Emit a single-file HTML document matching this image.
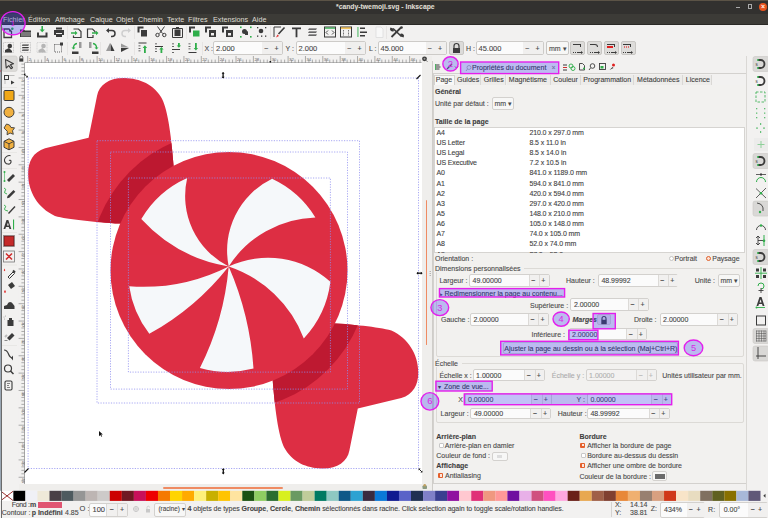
<!DOCTYPE html>
<html><head><meta charset="utf-8">
<style>
html,body{margin:0;padding:0;}
body{width:768px;height:518px;overflow:hidden;position:relative;background:#f2f1f0;font-family:"Liberation Sans",sans-serif;}
.a{position:absolute;}
.t{position:absolute;font-size:7px;line-height:8px;white-space:nowrap;color:#3c3c3c;-webkit-text-stroke:0.1px currentColor;}
.b{font-weight:bold;}
.mn{position:absolute;top:15.2px;font-size:7.2px;line-height:9px;color:#dfdbd2;white-space:nowrap;}
.inp{position:absolute;background:#fff;border:1px solid #cdcbc8;border-radius:2px;box-sizing:border-box;}
.sp{position:absolute;background:#f3f2f1;border:1px solid #cdcbc8;border-radius:0 2px 2px 0;box-sizing:border-box;}
.btn{position:absolute;background:#efeeed;border:1px solid #c8c6c3;border-radius:2px;box-sizing:border-box;}
.pur{position:absolute;background:rgba(170,170,245,0.72);border:1.3px solid #e21be8;box-sizing:border-box;}
.circ{position:absolute;border-radius:50%;background:rgba(170,170,245,0.72);border:1.3px solid #e21be8;box-sizing:border-box;color:#d81ee0;font-size:9px;line-height:14px;text-align:center;}
.ico{position:absolute;}
</style></head><body>
<!-- title bar -->
<div class="a" style="left:0;top:0;width:768px;height:13.5px;background:#32312f;"></div>
<div class="a" style="left:0;top:0;width:768px;height:1px;background:#5b5346;"></div>
<div class="t b" style="left:336px;top:3.0px;color:#dfdbd2;font-size:6.8px;">*candy-twemoji.svg - Inkscape</div>
<div class="a" style="left:736px;top:7px;width:4px;height:1px;background:#aaa;"></div>
<div class="a" style="left:748px;top:4px;width:4px;height:5px;border:1px solid #aaa;box-sizing:border-box;"></div>
<div class="a" style="left:759px;top:3px;width:8px;height:8px;border-radius:50%;background:#e8541e;"></div>
<div class="t" style="left:760px;top:3.0px;color:#fff;font-size:7px;width:6px;text-align:center;">×</div>
<!-- menu bar -->
<div class="a" style="left:0;top:13.5px;width:768px;height:10px;background:#3c3b37;"></div><div class="a" style="left:0;top:23.5px;width:768px;height:0.7px;background:#2a2926;"></div>
<div class="mn" style="left:3px">Fichier</div>
<div class="mn" style="left:28px">Édition</div>
<div class="mn" style="left:55px">Affichage</div>
<div class="mn" style="left:90px">Calque</div>
<div class="mn" style="left:116px">Objet</div>
<div class="mn" style="left:138px">Chemin</div>
<div class="mn" style="left:167px">Texte</div>
<div class="mn" style="left:188px">Filtres</div>
<div class="mn" style="left:213px">Extensions</div>
<div class="mn" style="left:252px">Aide</div>

<!-- toolbars -->
<svg class="a" style="left:0;top:0" width="768" height="58" viewBox="0 0 768 58">
<g fill="none" stroke="#e2e1df" stroke-width="0.8">
<path d="M67.5 26v13M134.5 26v13M186.5 26v13M270.5 26v13M386.5 26v13M67.5 42v13M100.5 42v13M134.5 42v13M202.5 42v13M454.5 42v13"/>
</g>
<g fill="#3b3b3b" stroke="none">
<!-- new doc -->
<path d="M4 29h5l2.5 2.5v6h-7.5z" fill="none" stroke="#3b3b3b" stroke-width="1.3"/>
<path d="M9 29v2.5h2.5z"/>
<circle cx="12.3" cy="28.8" r="1.3" fill="#2fae4a"/>
<!-- open -->
<path d="M20 29.5h4l1 1h6v6.5h-11z"/>
<path d="M21 32h10.5l-1 4.5h-9.5z" fill="#f2f1f0" opacity="0.35"/>
<!-- save -->
<path d="M37 32.5h2v3h6.5v-3h2v5h-10.5z"/>
<path d="M41.4 26h1.6v3.5h1.8l-2.6 2.8-2.6-2.8h1.8z" fill="#2fae4a"/>
<!-- print -->
<path d="M56 27.5h6v2h-6z M54 30h10v5h-2v-2h-6v2h-2z M56 34h6v3h-6z"/>
<!-- import -->
<path d="M73.5 29h5l2.5 2.5v6h-7.5v-2" fill="none" stroke="#3b3b3b" stroke-width="1.2"/>
<path d="M71 32.2h4v-1.5l2.5 2.3-2.5 2.3v-1.5h-4z" fill="#2fae4a"/>
<!-- export -->
<path d="M93 35v2.5h-5.5v-8.5h5l2.5 2.5v1" fill="none" stroke="#3b3b3b" stroke-width="1.2"/>
<path d="M92 32.2h4v-1.5l2.5 2.3-2.5 2.3v-1.5h-4z" fill="#2fae4a"/>
<!-- undo -->
<path d="M107 30.5h5a3 3 0 0 1 0 6h-1" fill="none" stroke="#3b3b3b" stroke-width="1.5"/>
<path d="M106 30.5l3-2.5v5z"/>
<!-- redo faded -->
<path d="M130 30.5h-5a3 3 0 0 0 0 6h1" fill="none" stroke="#cfcfcf" stroke-width="1.5"/>
<path d="M131 30.5l-3-2.5v5z" fill="#cfcfcf"/>
<!-- copy -->
<path d="M137.5 26.5h6v2h-4v4h-2z"/><path d="M141 30h6v6.5h-6z"/>
<!-- cut -->
<path d="M157.5 26.5l5 7M164.5 26.5l-5 7" stroke="#3b3b3b" stroke-width="1" fill="none"/>
<circle cx="157.5" cy="35" r="1.7" fill="none" stroke="#3b3b3b" stroke-width="1"/><circle cx="164.3" cy="35" r="1.7" fill="none" stroke="#3b3b3b" stroke-width="1"/>
<!-- paste -->
<path d="M172.5 28.5h10v9h-10z" fill="none" stroke="#3b3b3b" stroke-width="1"/>
<path d="M174.5 29.5h6v6.5h-6z M176 27h3v1.5h-3z"/>
<!-- paste in place -->
<path d="M189 26.5h6v2h-4v4h-2z"/><path d="M193 30.5h6.5v6h-6.5z" fill="#2fae4a"/>
<!-- lock-ish -->
<path d="M205 26.5h6v2h-4v4h-2z"/><path d="M209 30h7v7h-7z"/><path d="M211 33h3v2.5h-3z" fill="#f2f1f0"/>
<path d="M222 26.5h6v2h-4v4h-2z"/><path d="M226 30h7v7h-7z"/><path d="M228 33h3v2.5h-3z" fill="#f2f1f0"/>
<!-- group -->
<circle cx="244.5" cy="31.5" r="2.5"/><path d="M245 33l3-2v4h-3z"/>
<g fill="#2fae4a"><rect x="240" y="26.5" width="1.6" height="1.6"/><rect x="250" y="26.5" width="1.6" height="1.6"/><rect x="240" y="36" width="1.6" height="1.6"/><rect x="250" y="36" width="1.6" height="1.6"/></g>
<!-- ungroup -->
<circle cx="261" cy="31" r="2.3"/><g><rect x="257" y="27" width="1.3" height="1.3"/><rect x="265" y="27" width="1.3" height="1.3"/><rect x="257" y="35.5" width="1.3" height="1.3"/><rect x="265" y="35.5" width="1.3" height="1.3"/><rect x="261" y="35.5" width="1.3" height="1.3"/></g>
<!-- fill stroke -->
<path d="M274 37v-10h7" fill="none" stroke="#3b3b3b" stroke-width="1"/>
<path d="M284.5 27.5l-6 6.5" stroke="#3b3b3b" stroke-width="1.6"/><path d="M276 37.5l1.5-3 1.5 1.5z" fill="#e53030"/>
<!-- T -->
<path d="M292 27.5h9v1.8h-3.6v8h-1.8v-8h-3.6z"/>
<!-- layers -->
<path d="M309 28.5h8l-1 1.3h-8z M309 31.5h8l-1 1.3h-8z M309 34.5h8l-1 1.3h-8z"/>
<!-- xml -->
<rect x="324.5" y="27" width="11" height="10" fill="none" stroke="#3b3b3b" stroke-width="1"/>
<rect x="325" y="27.5" width="10" height="1.2" fill="#2fae4a"/>
<path d="M328 30.5l-2 2 2 2M332 30.5l2 2-2 2" fill="none" stroke="#3b3b3b" stroke-width="0.9"/>
<!-- objects -->
<rect x="340.5" y="27" width="11" height="10" fill="none" stroke="#3b3b3b" stroke-width="1"/>
<rect x="341" y="27.5" width="10" height="1.2" fill="#f0b020"/>
<path d="M343.5 30v6M348.5 30v6" stroke="#555" stroke-width="0.8" stroke-dasharray="1 0.5"/>
<!-- align -->
<rect x="357.5" y="27" width="0.9" height="10" fill="#2fae4a"/>
<path d="M360 27.5h5v1.6h-5z M360 31.5h7v1.6h-7z M360 35h5v1.6h-5z"/>
<!-- faded doc -->
<path d="M376 27h5l2 2v8.5h-7z" fill="#f8f8f8" stroke="#dcdcdc" stroke-width="0.8"/>
<!-- prefs -->
<path d="M391.5 37l9.5-9.5" stroke="#3b3b3b" stroke-width="1.8"/><circle cx="401.5" cy="27.5" r="1.3"/><path d="M393 28.5l8.5 8" stroke="#3b3b3b" stroke-width="1.6"/><path d="M390.5 27.5a2.5 2.5 0 0 0 3.5 3.5l-1-2.5z"/><path d="M403.5 37.5a2.5 2.5 0 0 0-3.5-3.5l1 2.5z"/>
<!-- toolbar2 -->
<rect x="3.5" y="42.5" width="10" height="10" fill="none" stroke="#bdbdbd" stroke-width="0.8" stroke-dasharray="1 0.6"/>
<circle cx="9.8" cy="46" r="2.3"/><path d="M5 50l4-2 3 3v1.5h-7z"/>
<rect x="20.5" y="42.5" width="10" height="10" fill="none" stroke="#bdbdbd" stroke-width="0.8" stroke-dasharray="1 0.6"/>
<path d="M22.5 44.5h6.5l-0.7 1.2h-6.5z M22.5 47h6.5l-0.7 1.2h-6.5z M22.5 49.5h6.5l-0.7 1.2h-6.5z"/>
<rect x="37" y="42.5" width="10" height="10" fill="none" stroke="#cfcfcf" stroke-width="0.8" stroke-dasharray="1 0.6"/>
<circle cx="43.5" cy="46" r="2.3" fill="#b5b5b5"/><path d="M38.5 50l4-2 3 3v1.5h-7z" fill="#b5b5b5"/>
<rect x="54.5" y="44.5" width="7" height="7.5" fill="none" stroke="#3b3b3b" stroke-width="0.8" stroke-dasharray="1 1"/>
<rect x="60" y="42.5" width="3" height="3"/>
<!-- rotate -->
<path d="M72 51.5h6.5v2.5h-6.5z"/><rect x="79" y="42" width="2.5" height="6" fill="#999"/>
<path d="M77 43.5a4 4 0 0 0-3.5 4.5" fill="none" stroke="#2fae4a" stroke-width="1.3"/><path d="M71.5 47.5h4l-2 2z" fill="#2fae4a"/>
<path d="M92 51.5h6.5v2.5h-6.5z"/><rect x="89" y="42" width="2.5" height="6" fill="#999"/>
<path d="M93 43.5a4 4 0 0 1 3.5 4.5" fill="none" stroke="#2fae4a" stroke-width="1.3"/><path d="M98.5 47.5h-4l2 2z" fill="#2fae4a"/>
<!-- flip -->
<path d="M110 43l-4 8h4z" fill="#9a9a9a"/><path d="M110.5 43l4 8h-4z"/>
<path d="M121 43.5l8 4-8 0z" fill="#9a9a9a"/><path d="M121 48l8 0-8 4z"/>
<!-- raise/lower -->
<path d="M138.5 42.5h8v0.9h-8z M138.5 45.5h2v0.7h-2z M138.5 48h2v0.7h-2z M138.5 50.5h2v0.7h-2z"/>
<path d="M144 53v-5h-1.3l2.2-2.8 2.2 2.8h-1.3v5z" fill="#2fae4a"/>
<path d="M155 43.5h2v0.7h-2z M155 46h8v0.9h-8z M155 48.5h2v0.7h-2z M155 51h2v0.7h-2z"/>
<path d="M160.5 53v-3.5h-1.3l2.2-2.5 2.2 2.5h-1.3v3.5z" fill="#2fae4a"/>
<path d="M172 43.5h2v0.7h-2z M172 46h2v0.7h-2z M172 49h8v0.9h-8z M172 52h2v0.7h-2z"/>
<path d="M178 43v2.5h-1.3l2.2 2.3 2.2-2.3h-1.3v-2.5z" fill="#2fae4a"/>
<path d="M188.5 43.5h2v0.7h-2z M188.5 46h2v0.7h-2z M188.5 48.5h2v0.7h-2z M188.5 52h8v0.9h-8z"/>
<path d="M195 43v5h-1.3l2.2 2.5 2.2-2.5h-1.3v-5z" fill="#2fae4a"/>
</g>
</svg>
<div class="t" style="left:204.5px;top:44.7px;color:#484848">X :</div><div class="inp" style="left:213px;top:41px;width:70px;height:14px;background:#fbfbfb;"></div><div class="a" style="left:262px;top:42px;width:1px;height:12px;background:#dddbd8"></div><div class="a" style="left:272.5px;top:42px;width:1px;height:12px;background:#dddbd8"></div><div class="a" style="left:262px;top:42px;width:20px;height:12px;background:#f0efee"></div><div class="t" style="left:264px;top:44.7px;color:#666">−</div><div class="t" style="left:274.5px;top:44.7px;color:#444">+</div><div class="t" style="left:216px;top:44.7px;color:#484848;font-size:7.5px">2.000</div><div class="t" style="left:285.5px;top:44.7px;color:#484848">Y :</div><div class="inp" style="left:295.5px;top:41px;width:70.5px;height:14px;background:#fbfbfb;"></div><div class="a" style="left:345px;top:42px;width:1px;height:12px;background:#dddbd8"></div><div class="a" style="left:355.5px;top:42px;width:1px;height:12px;background:#dddbd8"></div><div class="a" style="left:345px;top:42px;width:20px;height:12px;background:#f0efee"></div><div class="t" style="left:347px;top:44.7px;color:#666">−</div><div class="t" style="left:357.5px;top:44.7px;color:#444">+</div><div class="t" style="left:298.5px;top:44.7px;color:#484848;font-size:7.5px">2.000</div><div class="t" style="left:369px;top:44.7px;color:#484848">L :</div><div class="inp" style="left:377.5px;top:41px;width:69.0px;height:14px;background:#fbfbfb;"></div><div class="a" style="left:425.5px;top:42px;width:1px;height:12px;background:#dddbd8"></div><div class="a" style="left:436.0px;top:42px;width:1px;height:12px;background:#dddbd8"></div><div class="a" style="left:425.5px;top:42px;width:20px;height:12px;background:#f0efee"></div><div class="t" style="left:427.5px;top:44.7px;color:#666">−</div><div class="t" style="left:438.0px;top:44.7px;color:#444">+</div><div class="t" style="left:380.5px;top:44.7px;color:#484848;font-size:7.5px">45.000</div><div class="t" style="left:466px;top:44.7px;color:#484848">H :</div><div class="inp" style="left:475.5px;top:41px;width:68.5px;height:14px;background:#fbfbfb;"></div><div class="a" style="left:523px;top:42px;width:1px;height:12px;background:#dddbd8"></div><div class="a" style="left:533.5px;top:42px;width:1px;height:12px;background:#dddbd8"></div><div class="a" style="left:523px;top:42px;width:20px;height:12px;background:#f0efee"></div><div class="t" style="left:525px;top:44.7px;color:#666">−</div><div class="t" style="left:535.5px;top:44.7px;color:#444">+</div><div class="t" style="left:478.5px;top:44.7px;color:#484848;font-size:7.5px">45.000</div><div class="btn" style="left:448.5px;top:41px;width:15.5px;height:14px;background:#dcdbd9"></div><svg class="a" style="left:450px;top:42px" width="13" height="12"><path d="M4 6v-2a2.5 2.5 0 0 1 5 0v2" fill="none" stroke="#3b3b3b" stroke-width="1.2"/><rect x="3" y="6" width="7" height="5" fill="#3b3b3b"/></svg><div class="btn" style="left:546px;top:41px;width:23px;height:14px;background:#f7f7f6"></div><div class="t" style="left:549px;top:44.7px;color:#484848">mm ▾</div><div class="btn" style="left:570px;top:41px;width:15px;height:14px;background:#dddcda"></div><div class="btn" style="left:587px;top:41px;width:15px;height:14px;background:#dddcda"></div><div class="btn" style="left:604px;top:41px;width:15px;height:14px;background:#dddcda"></div><div class="btn" style="left:620.5px;top:41px;width:15px;height:14px;background:#dddcda"></div><svg class="a" style="left:570px;top:41px" width="66" height="14" viewBox="570 41 66 14">
<g fill="#3b3b3b">
<path d="M573 44h8v3h-1v-2h-7z"/><path d="M573 52h1v1h-1zM575 52h1v1h-1zM577 52h4v-1l2 1.5-2 1.5v-1h-4z"/>
<path d="M590 44h5a3 3 0 0 1 3 3h-1a2 2 0 0 0-2-2h-5z"/><path d="M590 52h1v1h-1zM592 52h1v1h-1zM594 52h4v-1l2 1.5-2 1.5v-1h-4z"/>
<path d="M607 44h8v3h-1v-2h-7z"/><rect x="607" y="46" width="6" height="2" fill="#e02020"/><path d="M607 52h1v1h-1zM609 52h1v1h-1zM611 52h4v-1l2 1.5-2 1.5v-1h-4z"/>
<path d="M623 44h8v3h-1v-2h-7z"/><path d="M624 46l1 1-1 1M626 46l1 1-1 1M628 46l1 1-1 1" stroke="#e02020" stroke-width="0.6" fill="none"/><path d="M623 52h1v1h-1zM625 52h1v1h-1zM627 52h4v-1l2 1.5-2 1.5v-1h-4z"/>
</g></svg>
<div class="a" style="left:0;top:24px;width:1px;height:494px;background:#9aa7b4"></div>

<svg class="a" style="left:0;top:0" width="768" height="518" viewBox="0 0 768 518">
<rect x="18.6" y="56" width="403" height="7" fill="#f2f1f0"/>
<rect x="18.6" y="56" width="6.2" height="428" fill="#f2f1f0"/>
<path d="M27.70 56V63 M31.17 59.6V63 M34.64 59.6V63 M38.12 59.6V63 M41.59 59.6V63 M45.06 56V63 M48.53 59.6V63 M52.00 59.6V63 M55.48 59.6V63 M58.95 59.6V63 M62.42 56V63 M65.89 59.6V63 M69.36 59.6V63 M72.84 59.6V63 M76.31 59.6V63 M79.78 56V63 M83.25 59.6V63 M86.72 59.6V63 M90.20 59.6V63 M93.67 59.6V63 M97.14 56V63 M100.61 59.6V63 M104.08 59.6V63 M107.56 59.6V63 M111.03 59.6V63 M114.50 56V63 M117.97 59.6V63 M121.44 59.6V63 M124.92 59.6V63 M128.39 59.6V63 M131.86 56V63 M135.33 59.6V63 M138.80 59.6V63 M142.28 59.6V63 M145.75 59.6V63 M149.22 56V63 M152.69 59.6V63 M156.16 59.6V63 M159.64 59.6V63 M163.11 59.6V63 M166.58 56V63 M170.05 59.6V63 M173.52 59.6V63 M177.00 59.6V63 M180.47 59.6V63 M183.94 56V63 M187.41 59.6V63 M190.88 59.6V63 M194.36 59.6V63 M197.83 59.6V63 M201.30 56V63 M204.77 59.6V63 M208.24 59.6V63 M211.72 59.6V63 M215.19 59.6V63 M218.66 56V63 M222.13 59.6V63 M225.60 59.6V63 M229.08 59.6V63 M232.55 59.6V63 M236.02 56V63 M239.49 59.6V63 M242.96 59.6V63 M246.44 59.6V63 M249.91 59.6V63 M253.38 56V63 M256.85 59.6V63 M260.32 59.6V63 M263.80 59.6V63 M267.27 59.6V63 M270.74 56V63 M274.21 59.6V63 M277.68 59.6V63 M281.16 59.6V63 M284.63 59.6V63 M288.10 56V63 M291.57 59.6V63 M295.04 59.6V63 M298.52 59.6V63 M301.99 59.6V63 M305.46 56V63 M308.93 59.6V63 M312.40 59.6V63 M315.88 59.6V63 M319.35 59.6V63 M322.82 56V63 M326.29 59.6V63 M329.76 59.6V63 M333.24 59.6V63 M336.71 59.6V63 M340.18 56V63 M343.65 59.6V63 M347.12 59.6V63 M350.60 59.6V63 M354.07 59.6V63 M357.54 56V63 M361.01 59.6V63 M364.48 59.6V63 M367.96 59.6V63 M371.43 59.6V63 M374.90 56V63 M378.37 59.6V63 M381.84 59.6V63 M385.32 59.6V63 M388.79 59.6V63 M392.26 56V63 M395.73 59.6V63 M399.20 59.6V63 M402.68 59.6V63 M406.15 59.6V63 M409.62 56V63 M413.09 59.6V63 M416.56 59.6V63 M420.04 59.6V63 M21.4 64.11H24.6 M21.4 67.58H24.6 M21.4 71.06H24.6 M21.4 74.53H24.6 M18.6 78.00H24.6 M21.4 81.47H24.6 M21.4 84.94H24.6 M21.4 88.42H24.6 M21.4 91.89H24.6 M18.6 95.36H24.6 M21.4 98.83H24.6 M21.4 102.30H24.6 M21.4 105.78H24.6 M21.4 109.25H24.6 M18.6 112.72H24.6 M21.4 116.19H24.6 M21.4 119.66H24.6 M21.4 123.14H24.6 M21.4 126.61H24.6 M18.6 130.08H24.6 M21.4 133.55H24.6 M21.4 137.02H24.6 M21.4 140.50H24.6 M21.4 143.97H24.6 M18.6 147.44H24.6 M21.4 150.91H24.6 M21.4 154.38H24.6 M21.4 157.86H24.6 M21.4 161.33H24.6 M18.6 164.80H24.6 M21.4 168.27H24.6 M21.4 171.74H24.6 M21.4 175.22H24.6 M21.4 178.69H24.6 M18.6 182.16H24.6 M21.4 185.63H24.6 M21.4 189.10H24.6 M21.4 192.58H24.6 M21.4 196.05H24.6 M18.6 199.52H24.6 M21.4 202.99H24.6 M21.4 206.46H24.6 M21.4 209.94H24.6 M21.4 213.41H24.6 M18.6 216.88H24.6 M21.4 220.35H24.6 M21.4 223.82H24.6 M21.4 227.30H24.6 M21.4 230.77H24.6 M18.6 234.24H24.6 M21.4 237.71H24.6 M21.4 241.18H24.6 M21.4 244.66H24.6 M21.4 248.13H24.6 M18.6 251.60H24.6 M21.4 255.07H24.6 M21.4 258.54H24.6 M21.4 262.02H24.6 M21.4 265.49H24.6 M18.6 268.96H24.6 M21.4 272.43H24.6 M21.4 275.90H24.6 M21.4 279.38H24.6 M21.4 282.85H24.6 M18.6 286.32H24.6 M21.4 289.79H24.6 M21.4 293.26H24.6 M21.4 296.74H24.6 M21.4 300.21H24.6 M18.6 303.68H24.6 M21.4 307.15H24.6 M21.4 310.62H24.6 M21.4 314.10H24.6 M21.4 317.57H24.6 M18.6 321.04H24.6 M21.4 324.51H24.6 M21.4 327.98H24.6 M21.4 331.46H24.6 M21.4 334.93H24.6 M18.6 338.40H24.6 M21.4 341.87H24.6 M21.4 345.34H24.6 M21.4 348.82H24.6 M21.4 352.29H24.6 M18.6 355.76H24.6 M21.4 359.23H24.6 M21.4 362.70H24.6 M21.4 366.18H24.6 M21.4 369.65H24.6 M18.6 373.12H24.6 M21.4 376.59H24.6 M21.4 380.06H24.6 M21.4 383.54H24.6 M21.4 387.01H24.6 M18.6 390.48H24.6 M21.4 393.95H24.6 M21.4 397.42H24.6 M21.4 400.90H24.6 M21.4 404.37H24.6 M18.6 407.84H24.6 M21.4 411.31H24.6 M21.4 414.78H24.6 M21.4 418.26H24.6 M21.4 421.73H24.6 M18.6 425.20H24.6 M21.4 428.67H24.6 M21.4 432.14H24.6 M21.4 435.62H24.6 M21.4 439.09H24.6 M18.6 442.56H24.6 M21.4 446.03H24.6 M21.4 449.50H24.6 M21.4 452.98H24.6 M21.4 456.45H24.6 M18.6 459.92H24.6 M21.4 463.39H24.6 M21.4 466.86H24.6 M21.4 470.34H24.6 M21.4 473.81H24.6 M18.6 477.28H24.6 M21.4 480.75H24.6" stroke="#8c8c8c" stroke-width="0.7" fill="none"/>
<path d="M24.6 62.8H421.6 M24.6 62.8V484.2" stroke="#8a8a8a" stroke-width="0.8" fill="none"/>
<g font-family="Liberation Sans" font-size="4.2" fill="#666"><text x="28.70" y="61" >2</text><text x="46.06" y="61" >4</text><text x="63.42" y="61" >6</text><text x="80.78" y="61" >8</text><text x="98.14" y="61" >10</text><text x="115.50" y="61" >12</text><text x="132.86" y="61" >14</text><text x="150.22" y="61" >16</text><text x="167.58" y="61" >18</text><text x="184.94" y="61" >20</text><text x="202.30" y="61" >22</text><text x="219.66" y="61" >24</text><text x="237.02" y="61" >26</text><text x="254.38" y="61" >28</text><text x="271.74" y="61" >30</text><text x="289.10" y="61" >32</text><text x="306.46" y="61" >34</text><text x="323.82" y="61" >36</text><text x="341.18" y="61" >38</text><text x="358.54" y="61" >40</text><text x="375.90" y="61" >42</text><text x="393.26" y="61" >44</text><text x="410.62" y="61" >46</text></g>
<g font-family="Liberation Sans" font-size="4.2" fill="#666"><text transform="translate(21.5 79.00) rotate(90)" x="0" y="0">2</text><text transform="translate(21.5 96.36) rotate(90)" x="0" y="0">4</text><text transform="translate(21.5 113.72) rotate(90)" x="0" y="0">6</text><text transform="translate(21.5 131.08) rotate(90)" x="0" y="0">8</text><text transform="translate(21.5 148.44) rotate(90)" x="0" y="0">10</text><text transform="translate(21.5 165.80) rotate(90)" x="0" y="0">12</text><text transform="translate(21.5 183.16) rotate(90)" x="0" y="0">14</text><text transform="translate(21.5 200.52) rotate(90)" x="0" y="0">16</text><text transform="translate(21.5 217.88) rotate(90)" x="0" y="0">18</text><text transform="translate(21.5 235.24) rotate(90)" x="0" y="0">20</text><text transform="translate(21.5 252.60) rotate(90)" x="0" y="0">22</text><text transform="translate(21.5 269.96) rotate(90)" x="0" y="0">24</text><text transform="translate(21.5 287.32) rotate(90)" x="0" y="0">26</text><text transform="translate(21.5 304.68) rotate(90)" x="0" y="0">28</text><text transform="translate(21.5 322.04) rotate(90)" x="0" y="0">30</text><text transform="translate(21.5 339.40) rotate(90)" x="0" y="0">32</text><text transform="translate(21.5 356.76) rotate(90)" x="0" y="0">34</text><text transform="translate(21.5 374.12) rotate(90)" x="0" y="0">36</text><text transform="translate(21.5 391.48) rotate(90)" x="0" y="0">38</text><text transform="translate(21.5 408.84) rotate(90)" x="0" y="0">40</text><text transform="translate(21.5 426.20) rotate(90)" x="0" y="0">42</text><text transform="translate(21.5 443.56) rotate(90)" x="0" y="0">44</text><text transform="translate(21.5 460.92) rotate(90)" x="0" y="0">46</text><text transform="translate(21.5 478.28) rotate(90)" x="0" y="0">48</text></g>
<path d="M19.8 58.5v-1.2a1.5 1.5 0 0 1 3 0v1.2" stroke="#3b3b3b" stroke-width="0.8" fill="none"/><rect x="19.3" y="58.4" width="4" height="3.2" fill="#3b3b3b"/>
</svg>
<div class="a" style="left:24.8px;top:63px;width:396.8px;height:421.2px;background:#fff"></div>
<div class="a" style="left:421.6px;top:56px;width:10.6px;height:434.5px;background:#efeeec"></div>
<div class="a" style="left:18.6px;top:484.2px;width:403px;height:6.3px;background:#efeeec"></div>
<div class="a" style="left:425.6px;top:200px;width:1.4px;height:144.5px;background:#ef8b63;border-radius:1px"></div>
<div class="a" style="left:163px;top:487.3px;width:119.7px;height:1.4px;background:#ef8b63;border-radius:1px"></div>
<div class="a" style="left:432.2px;top:61px;width:0.8px;height:429.5px;background:#cfcdc9"></div>
<svg class="a" style="left:0;top:0" width="768" height="518" viewBox="0 0 768 518">
<defs><clipPath id="cv"><rect x="24.8" y="63" width="396.8" height="421.2"/></clipPath>
<clipPath id="wr"><path d="M88.6 137.8L97 96C99 85 109 78 123 78C136 78 152 82 161 97C167 107 171 130 174 170L215 255L120 223.6C95 222 68 219.5 55 215.9C38 208 28.2 192 28.1 174C28 162 33 152 45.1 148.3Z"/><path transform="rotate(180 223.2 273.2)" d="M88.6 137.8L97 96C99 85 109 78 123 78C136 78 152 82 161 97C167 107 171 130 174 170L215 255L120 223.6C95 222 68 219.5 55 215.9C38 208 28.2 192 28.1 174C28 162 33 152 45.1 148.3Z"/></clipPath></defs>
<g clip-path="url(#cv)">
<path fill="#dd2e44" d="M88.6 137.8L97 96C99 85 109 78 123 78C136 78 152 82 161 97C167 107 171 130 174 170L215 255L120 223.6C95 222 68 219.5 55 215.9C38 208 28.2 192 28.1 174C28 162 33 152 45.1 148.3Z"/>
<path fill="#dd2e44" transform="rotate(180 223.2 273.2)" d="M88.6 137.8L97 96C99 85 109 78 123 78C136 78 152 82 161 97C167 107 171 130 174 170L215 255L120 223.6C95 222 68 219.5 55 215.9C38 208 28.2 192 28.1 174C28 162 33 152 45.1 148.3Z"/>
<circle cx="229" cy="270.5" r="140" fill="#be1931" clip-path="url(#wr)"/>
<circle cx="229" cy="270.5" r="118.5" fill="#dd2e44"/>
<path fill="#f5f8fa" d="M228.7 266.4A78.7 78.7 0 0 1 187.2 178.1A101.4 101.4 0 0 0 141.3 219.1A150.9 150.9 0 0 0 228.7 266.4ZM228.7 266.4A106.5 106.5 0 0 1 315.4 217.5A101.4 101.4 0 0 0 272.1 178.8A79.5 79.5 0 0 0 228.7 266.4ZM228.7 266.4A122.0 122.0 0 0 1 303.8 338.4A101.4 101.4 0 0 0 330.4 281.7A93.0 93.0 0 0 0 228.7 266.4ZM228.7 266.4A279.3 279.3 0 0 1 199.9 367.9A101.4 101.4 0 0 0 253.5 368.6A305.1 305.1 0 0 0 228.7 266.4ZM228.7 266.4A190.1 190.1 0 0 1 129.2 286.3A101.4 101.4 0 0 0 149.3 333.8A263.4 263.4 0 0 0 228.7 266.4Z"/>
<g fill="none" stroke="#8f8ff0" stroke-width="0.9" stroke-dasharray="1.2 1.4" opacity="0.85">
<rect x="28.1" y="78" width="390.4" height="390.5"/>
<rect x="97" y="140.7" width="262.5" height="262.3"/>
<rect x="110.5" y="152" width="237" height="237.1"/>
<rect x="128.4" y="178" width="202" height="194.1"/>
</g>
</g>
</svg>
<svg class="a" style="left:0;top:0" width="768" height="518" viewBox="0 0 768 518"><g fill="#111" stroke="#111">
<path d="M24.6 74.3l2.6 2.6" stroke-width="0.9"/><path d="M24 73.7h2l-2 2z M27.8 77.5h-2l2-2z" stroke="none"/>
<path d="M223.1 72.5v5.5" stroke-width="1.3"/><path d="M221.6 73.8l1.5-1.8 1.5 1.8z M221.6 76.8l1.5 1.8 1.5-1.8z" stroke="none"/>
<path d="M416.5 79l4-4" stroke-width="1.1"/>
<path d="M417 273.2h5" stroke-width="1.3"/><path d="M418.2 271.7l-1.8 1.5 1.8 1.5z M420.8 271.7l1.8 1.5-1.8 1.5z" stroke="none"/>
<path d="M223.3 468.8v5" stroke-width="1.3"/><path d="M221.8 470l1.5-1.8 1.5 1.8z M221.8 472.6l1.5 1.8 1.5-1.8z" stroke="none"/>
<path d="M419.2 469.2l2.6 2.6" stroke-width="0.9"/><path d="M418.6 468.6h2l-2 2z M422.4 472.4h-2l2-2z" stroke="none"/><path d="M99 431v5.3l1.3-1.3 1.2 1.8 0.7-.4-1.1-1.8h1.8z" stroke="none"/>
<path d="M24.5 472.5l4-4" stroke-width="1.1"/>
<path d="M270.3 61v1.5" stroke-width="1.5"/><rect x="422.5" y="485.5" width="4.5" height="3.5" rx="0.8" fill="#8a9a80" stroke="none"/><circle cx="424.7" cy="485.3" r="1.3" fill="#c0a060" stroke="none"/>
<circle cx="424.5" cy="58.8" r="2.4" fill="#3a3a3a" stroke="none"/><circle cx="424.5" cy="58.8" r="1" fill="#999" stroke="none"/><path d="M426.2 60.5l1 1" stroke="#333" stroke-width="1"/>
<path d="M430.2 271v5" stroke="#777" stroke-width="0.7" stroke-dasharray="1 1"/>
</g></svg>
<svg class="a" style="left:0;top:0" width="20" height="400" viewBox="0 0 20 400">
<rect x="1.8" y="56" width="15.4" height="15.4" rx="2" fill="#dcdbd9" stroke="#cbc9c6" stroke-width="0.6"/>
<g fill="#3b3b3b">
<!-- arrow -->
<path d="M5.5 59.5l8 4.2-3.2 1 2.2 3-1.5 1-2.2-3-2.6 2.3z" fill="none" stroke="#3b3b3b" stroke-width="1.1" stroke-linejoin="round"/>
<!-- node -->
<rect x="4.5" y="75.5" width="4" height="4" fill="none" stroke="#3b3b3b" stroke-width="1"/>
<path d="M8.5 75.5h6" stroke="#888" stroke-width="0.5"/><path d="M5 80v4" stroke="#888" stroke-width="0.5"/>
<path d="M11 80.5l3.5 2-3.5 2z"/>
<!-- rect -->
<rect x="4" y="90.5" width="10" height="10" rx="1" fill="#f0a818" stroke="#3b3b3b" stroke-width="1"/>
<!-- circle -->
<circle cx="9" cy="112.3" r="5" fill="#f0b040" stroke="#3b3b3b" stroke-width="1"/>
<!-- star -->
<path d="M4 128l2.5-4 3 1 1.5 2.5 3.5.3-2 3 .8 3.5-3.2-1.3-3 1.8.2-3.5z" fill="#f0b040" stroke="#3b3b3b" stroke-width="0.9"/>
<!-- 3d box -->
<path d="M9 138.8l5 2.5v6l-5 2.5-5-2.5v-6z" fill="#f0b040" stroke="#3b3b3b" stroke-width="1"/><path d="M4 141.3l5 2.5 5-2.5M9 143.8v6" fill="none" stroke="#3b3b3b" stroke-width="0.9"/>
<!-- spiral -->
<path d="M9 160.5a1.3 1.3 0 0 1 2 0.5a2.5 2.5 0 0 1-3 3a3.8 3.8 0 0 1-3.5-4.5a5 5 0 0 1 6-3.8" fill="none" stroke="#3b3b3b" stroke-width="1.1"/>
<!-- pen -->
<path d="M7 180l6-6 2 2-6 6z"/><circle cx="4.5" cy="172" r="1" fill="#2fae4a"/><circle cx="4.5" cy="181" r="1" fill="#2fae4a"/><path d="M4.5 172v9" stroke="#2fae4a" stroke-width="0.6"/>
<!-- pencil -->
<path d="M7.5 196l6-6 1.8 1.8-6 6-2.3.5z"/><path d="M4 188q3 1 1 3t2 3" fill="none" stroke="#2fae4a" stroke-width="0.9"/>
<!-- calligraphy -->
<path d="M8 213l6.5-7 1 1-6.5 7z"/><path d="M4 205q3 1 1 3t3 3" fill="none" stroke="#2fae4a" stroke-width="0.9"/>
<!-- text -->
<path d="M3.5 229l3-9h1.8l3 9h-1.8l-.7-2h-2.8l-.7 2z M6.9 225.5h2l-1-3z"/><rect x="13" y="219.5" width="1.1" height="10" fill="#2fae4a"/>
<!-- gradient -->
<rect x="3.5" y="235.5" width="11" height="11" fill="#6a1a1a" stroke="#888" stroke-width="0.6"/><rect x="4.5" y="236.5" width="9" height="9" fill="#c42a2a"/>
<!-- mesh -->
<rect x="3.5" y="251" width="11" height="11" fill="#f2f1f0" stroke="#777" stroke-width="0.8"/><path d="M9 256.5l-3-3M9 256.5l3 3M9 256.5l-3 3M9 256.5l3-3" stroke="#d03030" stroke-width="1.6"/>
<!-- dropper -->
<path d="M8 277l5-5 1.5 1.5-5 5z" fill="none" stroke="#3b3b3b" stroke-width="1"/><path d="M13 270.5l2 2" stroke="#3b3b3b" stroke-width="2"/><path d="M4.5 268.5q-1.5 2 0 2.8q1.5-0.8 0-2.8z" fill="#e02020"/>
<!-- bucket -->
<path d="M8 285l4-3 3 4-4 3z"/><path d="M5 290q-1.7 2.2 0 3q1.7-.8 0-3z" fill="#e02020"/>
<!-- tweak -->
<path d="M4 309v-3l3-1q1-3 3-3t3 2l1.5 2v3z"/>
<!-- spray -->
<rect x="7.5" y="320" width="6" height="6"/><rect x="9" y="318" width="3" height="2"/><g fill="#999"><circle cx="4" cy="317" r=".5"/><circle cx="5.5" cy="316" r=".5"/><circle cx="4.5" cy="319" r=".5"/></g>
<!-- eraser -->
<path d="M7 338l5-5 2.5 2.5-5 5z"/><path d="M4.5 340.5h3" stroke="#888" stroke-width="1"/><path d="M5 337l2-2" stroke="#bbb" stroke-width="2"/>
<!-- connector -->
<path d="M4 350q3 0 4.5 4t4.5 4" fill="none" stroke="#3b3b3b" stroke-width="1.2"/><path d="M13 355.5v5l-2-2.5z"/>
<!-- zoom -->
<circle cx="8" cy="368.5" r="3.5" fill="none" stroke="#3b3b3b" stroke-width="1.2"/><path d="M10.5 371l3 3" stroke="#3b3b3b" stroke-width="1.5"/>
<!-- measure -->
<rect x="5" y="381" width="7" height="9" rx="1.2" fill="none" stroke="#3b3b3b" stroke-width="1.1"/><path d="M7 383.5h3M7 385.5h2M7 387.5h3" stroke="#3b3b3b" stroke-width="0.6"/>
</g>
<path d="M2 87.5h15M2 152.5h15M2 168.5h15M2 232.5h15M2 265h15M2 345.5h15" stroke="#dedcda" stroke-width="0.5"/>
</svg>
<div class="a" style="left:433px;top:56px;width:315px;height:434px;background:#f2f1f0"></div>
<div class="a" style="left:432.5px;top:73.3px;width:314px;height:410.5px;border:0.8px solid #d3d1ce;box-sizing:border-box"></div>
<div class="a" style="left:433px;top:85px;width:313.5px;height:0.8px;background:#d5d3d0"></div>
<div class="a" style="left:433.8px;top:75.2px;width:20.8px;height:10.6px;background:#f8f8f7;border:0.8px solid #d5d3d0;border-bottom:none;box-sizing:border-box"></div>
<div class="t " style="left:435.8px;top:76.3px;color:#3e3e3e;">Page</div>
<div class="a" style="left:454.6px;top:75.2px;width:26.6px;height:9.8px;background:#edecea;border-right:0.8px solid #dad8d5;box-sizing:border-box"></div>
<div class="t " style="left:457px;top:76.3px;color:#3e3e3e;">Guides</div>
<div class="a" style="left:481.2px;top:75.2px;width:25.3px;height:9.8px;background:#edecea;border-right:0.8px solid #dad8d5;box-sizing:border-box"></div>
<div class="t " style="left:483.8px;top:76.3px;color:#3e3e3e;">Grilles</div>
<div class="a" style="left:506.5px;top:75.2px;width:44.5px;height:9.8px;background:#edecea;border-right:0.8px solid #dad8d5;box-sizing:border-box"></div>
<div class="t " style="left:508.8px;top:76.3px;color:#3e3e3e;">Magnétisme</div>
<div class="a" style="left:551px;top:75.2px;width:30.0px;height:9.8px;background:#edecea;border-right:0.8px solid #dad8d5;box-sizing:border-box"></div>
<div class="t " style="left:553.3px;top:76.3px;color:#3e3e3e;">Couleur</div>
<div class="a" style="left:581px;top:75.2px;width:53.2px;height:9.8px;background:#edecea;border-right:0.8px solid #dad8d5;box-sizing:border-box"></div>
<div class="t " style="left:583.3px;top:76.3px;color:#3e3e3e;">Programmation</div>
<div class="a" style="left:634.2px;top:75.2px;width:48.8px;height:9.8px;background:#edecea;border-right:0.8px solid #dad8d5;box-sizing:border-box"></div>
<div class="t " style="left:637.1px;top:76.3px;color:#3e3e3e;">Métadonnées</div>
<div class="a" style="left:683px;top:75.2px;width:29.4px;height:9.8px;background:#edecea;border-right:0.8px solid #dad8d5;box-sizing:border-box"></div>
<div class="t " style="left:685.8px;top:76.3px;color:#3e3e3e;">Licence</div>
<div class="a" style="left:433.8px;top:85.4px;width:312.6px;height:398px;background:#f2f1ef"></div>
<div class="t b" style="left:435px;top:87.5px;color:#3e3e3e;">Général</div>
<div class="t " style="left:435px;top:100.0px;color:#484848;">Unité par défaut :</div>
<div class="btn" style="left:491.5px;top:97.4px;width:22.7px;height:12.6px;background:#f7f7f6;border-color:#d3d1ce"></div>
<div class="t " style="left:494.5px;top:99.7px;color:#484848;">mm ▾</div>
<div class="t b" style="left:435px;top:117.5px;color:#3e3e3e;">Taille de la page</div>
<div class="a" style="left:434px;top:126.6px;width:310.5px;height:126px;background:#fff;border:0.8px solid #d6d4d1;box-sizing:border-box"></div>
<div class="t " style="left:436.6px;top:128.8px;color:#3e3e3e;letter-spacing:-0.15px">A4</div>
<div class="t " style="left:529.4px;top:128.8px;color:#3e3e3e;letter-spacing:-0.1px">210.0 x 297.0 mm</div>
<div class="t " style="left:436.6px;top:138.9px;color:#3e3e3e;letter-spacing:-0.15px">US Letter</div>
<div class="t " style="left:529.4px;top:138.9px;color:#3e3e3e;letter-spacing:-0.1px">8.5 x 11.0 in</div>
<div class="t " style="left:436.6px;top:149.1px;color:#3e3e3e;letter-spacing:-0.15px">US Legal</div>
<div class="t " style="left:529.4px;top:149.1px;color:#3e3e3e;letter-spacing:-0.1px">8.5 x 14.0 in</div>
<div class="t " style="left:436.6px;top:159.2px;color:#3e3e3e;letter-spacing:-0.15px">US Executive</div>
<div class="t " style="left:529.4px;top:159.2px;color:#3e3e3e;letter-spacing:-0.1px">7.2 x 10.5 in</div>
<div class="t " style="left:436.6px;top:169.4px;color:#3e3e3e;letter-spacing:-0.15px">A0</div>
<div class="t " style="left:529.4px;top:169.4px;color:#3e3e3e;letter-spacing:-0.1px">841.0 x 1189.0 mm</div>
<div class="t " style="left:436.6px;top:179.5px;color:#3e3e3e;letter-spacing:-0.15px">A1</div>
<div class="t " style="left:529.4px;top:179.5px;color:#3e3e3e;letter-spacing:-0.1px">594.0 x 841.0 mm</div>
<div class="t " style="left:436.6px;top:189.7px;color:#3e3e3e;letter-spacing:-0.15px">A2</div>
<div class="t " style="left:529.4px;top:189.7px;color:#3e3e3e;letter-spacing:-0.1px">420.0 x 594.0 mm</div>
<div class="t " style="left:436.6px;top:199.8px;color:#3e3e3e;letter-spacing:-0.15px">A3</div>
<div class="t " style="left:529.4px;top:199.8px;color:#3e3e3e;letter-spacing:-0.1px">297.0 x 420.0 mm</div>
<div class="t " style="left:436.6px;top:210.0px;color:#3e3e3e;letter-spacing:-0.15px">A5</div>
<div class="t " style="left:529.4px;top:210.0px;color:#3e3e3e;letter-spacing:-0.1px">148.0 x 210.0 mm</div>
<div class="t " style="left:436.6px;top:220.2px;color:#3e3e3e;letter-spacing:-0.15px">A6</div>
<div class="t " style="left:529.4px;top:220.2px;color:#3e3e3e;letter-spacing:-0.1px">105.0 x 148.0 mm</div>
<div class="t " style="left:436.6px;top:230.3px;color:#3e3e3e;letter-spacing:-0.15px">A7</div>
<div class="t " style="left:529.4px;top:230.3px;color:#3e3e3e;letter-spacing:-0.1px">74.0 x 105.0 mm</div>
<div class="t " style="left:436.6px;top:240.4px;color:#3e3e3e;letter-spacing:-0.15px">A8</div>
<div class="t " style="left:529.4px;top:240.4px;color:#3e3e3e;letter-spacing:-0.1px">52.0 x 74.0 mm</div>
<div class="t " style="left:436.6px;top:251.3px;color:#3e3e3e;letter-spacing:-0.15px">A9</div>
<div class="t " style="left:529.4px;top:251.3px;color:#3e3e3e;letter-spacing:-0.1px">37.0 x 52.0 mm</div>

<div class="a" style="left:434px;top:252.6px;width:311px;height:5px;background:#f2f1ef"></div>
<div class="t " style="left:435px;top:254.7px;color:#484848;">Orientation :</div>
<div class="a" style="left:668.5px;top:255.7px;width:5px;height:5px;border-radius:50%;background:#fff;border:0.7px solid #c4c4c4;box-sizing:border-box"></div>
<div class="t " style="left:674.5px;top:254.7px;color:#484848;">Portrait</div>
<div class="a" style="left:706.3px;top:255.7px;width:5px;height:5px;border-radius:50%;background:#fbe0d4;border:1.4px solid #e0602a;box-sizing:border-box"></div>
<div class="t " style="left:712.3px;top:254.7px;color:#484848;">Paysage</div>
<div class="a" style="left:436px;top:268.4px;width:308.2px;height:88.3px;border:0.8px solid #dcdad6;border-radius:2px;box-sizing:border-box"></div>
<div class="a" style="left:434px;top:264px;width:90px;height:8px;background:#f2f1ef"></div>
<div class="t " style="left:435px;top:265.1px;color:#484848;">Dimensions personnalisées</div>
<div class="t " style="left:439.4px;top:277.3px;color:#484848;">Largeur :</div>
<div class="inp" style="left:469px;top:274.3px;width:80.6px;height:12.7px;background:#fbfbfb;border-color:#d3d1ce"></div>
<div class="a" style="left:528.6px;top:275.3px;width:20px;height:10.7px;background:#f1f0ef"></div>
<div class="a" style="left:528.6px;top:275.3px;width:0.7px;height:10.7px;background:#dcdad7"></div>
<div class="a" style="left:539.1px;top:275.3px;width:0.7px;height:10.7px;background:#dcdad7"></div>
<div class="t " style="left:531.1px;top:277.3px;color:#484848;">−</div>
<div class="t " style="left:541.3000000000001px;top:277.3px;color:#484848;">+</div>
<div class="t " style="left:472.5px;top:277.3px;color:#444;">49.00000</div>
<div class="t " style="left:566px;top:277.3px;color:#484848;">Hauteur :</div>
<div class="inp" style="left:597.9px;top:274.3px;width:80.6px;height:12.7px;background:#fbfbfb;border-color:#d3d1ce"></div>
<div class="a" style="left:657.5px;top:275.3px;width:20px;height:10.7px;background:#f1f0ef"></div>
<div class="a" style="left:657.5px;top:275.3px;width:0.7px;height:10.7px;background:#dcdad7"></div>
<div class="a" style="left:668.0px;top:275.3px;width:0.7px;height:10.7px;background:#dcdad7"></div>
<div class="t " style="left:660.0px;top:277.3px;color:#484848;">−</div>
<div class="t " style="left:670.2px;top:277.3px;color:#484848;">+</div>
<div class="t " style="left:601.4px;top:277.3px;color:#444;">48.99992</div>
<div class="t " style="left:694.8px;top:277.3px;color:#484848;">Unité :</div>
<div class="btn" style="left:717.7px;top:274px;width:22.2px;height:13px;background:#f7f7f6;border-color:#d3d1ce"></div>
<div class="t " style="left:720.5px;top:277.2px;color:#484848;">mm ▾</div>
<div class="t " style="left:530px;top:301.6px;color:#484848;">Supérieure :</div>
<div class="inp" style="left:570.4px;top:298.3px;width:78.4px;height:12.7px;background:#fbfbfb;border-color:#d3d1ce"></div>
<div class="a" style="left:627.8px;top:299.3px;width:20px;height:10.7px;background:#f1f0ef"></div>
<div class="a" style="left:627.8px;top:299.3px;width:0.7px;height:10.7px;background:#dcdad7"></div>
<div class="a" style="left:638.3px;top:299.3px;width:0.7px;height:10.7px;background:#dcdad7"></div>
<div class="t " style="left:630.3px;top:301.3px;color:#484848;">−</div>
<div class="t " style="left:640.5px;top:301.3px;color:#484848;">+</div>
<div class="t " style="left:573.9px;top:301.3px;color:#444;">2.00000</div>
<div class="t " style="left:441px;top:316.3px;color:#484848;">Gauche :</div>
<div class="inp" style="left:469.9px;top:313.2px;width:78.9px;height:12.8px;background:#fbfbfb;border-color:#d3d1ce"></div>
<div class="a" style="left:527.8px;top:314.2px;width:20px;height:10.8px;background:#f1f0ef"></div>
<div class="a" style="left:527.8px;top:314.2px;width:0.7px;height:10.8px;background:#dcdad7"></div>
<div class="a" style="left:538.3px;top:314.2px;width:0.7px;height:10.8px;background:#dcdad7"></div>
<div class="t " style="left:530.3px;top:316.3px;color:#484848;">−</div>
<div class="t " style="left:540.5px;top:316.3px;color:#484848;">+</div>
<div class="t " style="left:473.4px;top:316.3px;color:#444;">2.00000</div>
<div class="t b" style="left:572.5px;top:316.3px;color:#444;font-style:italic">Marges</div>
<div class="t " style="left:634px;top:316.3px;color:#484848;">Droite :</div>
<div class="inp" style="left:659.6px;top:313.2px;width:78.4px;height:12.8px;background:#fbfbfb;border-color:#d3d1ce"></div>
<div class="a" style="left:717.0px;top:314.2px;width:20px;height:10.8px;background:#f1f0ef"></div>
<div class="a" style="left:717.0px;top:314.2px;width:0.7px;height:10.8px;background:#dcdad7"></div>
<div class="a" style="left:727.5px;top:314.2px;width:0.7px;height:10.8px;background:#dcdad7"></div>
<div class="t " style="left:719.5px;top:316.3px;color:#484848;">−</div>
<div class="t " style="left:729.7px;top:316.3px;color:#484848;">+</div>
<div class="t " style="left:663.1px;top:316.3px;color:#444;">2.00000</div>
<div class="t " style="left:531.5px;top:330.5px;color:#484848;">Inférieure :</div>
<div class="inp" style="left:568.5px;top:327.5px;width:78.5px;height:12.5px;background:#fbfbfb;border-color:#d3d1ce"></div>
<div class="a" style="left:626.0px;top:328.5px;width:20px;height:10.5px;background:#f1f0ef"></div>
<div class="a" style="left:626.0px;top:328.5px;width:0.7px;height:10.5px;background:#dcdad7"></div>
<div class="a" style="left:636.5px;top:328.5px;width:0.7px;height:10.5px;background:#dcdad7"></div>
<div class="t " style="left:628.5px;top:330.5px;color:#484848;">−</div>
<div class="t " style="left:638.7px;top:330.5px;color:#484848;">+</div>
<div class="t " style="left:572.0px;top:330.5px;color:#444;">2.00000</div>
<div class="a" style="left:436px;top:363px;width:308.2px;height:60.4px;border:0.8px solid #dcdad6;border-radius:2px;box-sizing:border-box"></div>
<div class="a" style="left:434px;top:359px;width:28px;height:8px;background:#f2f1ef"></div>
<div class="t " style="left:435px;top:359.7px;color:#484848;">Échelle</div>
<div class="t " style="left:439.4px;top:371.7px;color:#484848;">Échelle x :</div>
<div class="inp" style="left:472.6px;top:369px;width:72.4px;height:12.0px;background:#fbfbfb;border-color:#d3d1ce"></div>
<div class="a" style="left:524.0px;top:370px;width:20px;height:10.0px;background:#f1f0ef"></div>
<div class="a" style="left:524.0px;top:370px;width:0.7px;height:10.0px;background:#dcdad7"></div>
<div class="a" style="left:534.5px;top:370px;width:0.7px;height:10.0px;background:#dcdad7"></div>
<div class="t " style="left:526.5px;top:371.7px;color:#484848;">−</div>
<div class="t " style="left:536.7px;top:371.7px;color:#484848;">+</div>
<div class="t " style="left:476.1px;top:371.7px;color:#444;">1.00000</div>
<div class="t " style="left:551.8px;top:371.7px;color:#aaa;">Échelle y :</div>
<div class="inp" style="left:585.6px;top:369px;width:71.4px;height:12.0px;background:#f3f2f1;border-color:#d3d1ce"></div>
<div class="a" style="left:636.0px;top:370px;width:20px;height:10.0px;background:#f1f0ef"></div>
<div class="a" style="left:636.0px;top:370px;width:0.7px;height:10.0px;background:#dcdad7"></div>
<div class="a" style="left:646.5px;top:370px;width:0.7px;height:10.0px;background:#dcdad7"></div>
<div class="t " style="left:638.5px;top:371.7px;color:#b8b8b8;">−</div>
<div class="t " style="left:648.7px;top:371.7px;color:#b8b8b8;">+</div>
<div class="t " style="left:589.1px;top:371.7px;color:#b0b0b0;">1.00000</div>
<div class="t " style="left:662.3px;top:371.7px;color:#484848;">Unités utilisateur par mm.</div>
<div class="t " style="left:458.2px;top:395.5px;color:#484848;">X :</div>
<div class="inp" style="left:464.5px;top:393.4px;width:87.5px;height:11.2px;background:#fbfbfb;border-color:#d3d1ce"></div>
<div class="a" style="left:531.0px;top:394.4px;width:20px;height:9.2px;background:#f1f0ef"></div>
<div class="a" style="left:531.0px;top:394.4px;width:0.7px;height:9.2px;background:#dcdad7"></div>
<div class="a" style="left:541.5px;top:394.4px;width:0.7px;height:9.2px;background:#dcdad7"></div>
<div class="t " style="left:533.5px;top:395.7px;color:#484848;">−</div>
<div class="t " style="left:543.7px;top:395.7px;color:#484848;">+</div>
<div class="t " style="left:468.0px;top:395.7px;color:#444;">0.00000</div>
<div class="t " style="left:576.5px;top:395.5px;color:#484848;">Y :</div>
<div class="inp" style="left:586.9px;top:393.4px;width:85.1px;height:11.2px;background:#fbfbfb;border-color:#d3d1ce"></div>
<div class="a" style="left:651.0px;top:394.4px;width:20px;height:9.2px;background:#f1f0ef"></div>
<div class="a" style="left:651.0px;top:394.4px;width:0.7px;height:9.2px;background:#dcdad7"></div>
<div class="a" style="left:661.5px;top:394.4px;width:0.7px;height:9.2px;background:#dcdad7"></div>
<div class="t " style="left:653.5px;top:395.7px;color:#484848;">−</div>
<div class="t " style="left:663.7px;top:395.7px;color:#484848;">+</div>
<div class="t " style="left:590.4px;top:395.7px;color:#444;">0.00000</div>
<div class="t " style="left:440.6px;top:410.3px;color:#484848;">Largeur :</div>
<div class="inp" style="left:470.4px;top:407.8px;width:80.8px;height:11.4px;background:#fbfbfb;border-color:#d3d1ce"></div>
<div class="a" style="left:530.2px;top:408.8px;width:20px;height:9.4px;background:#f1f0ef"></div>
<div class="a" style="left:530.2px;top:408.8px;width:0.7px;height:9.4px;background:#dcdad7"></div>
<div class="a" style="left:540.7px;top:408.8px;width:0.7px;height:9.4px;background:#dcdad7"></div>
<div class="t " style="left:532.7px;top:410.2px;color:#484848;">−</div>
<div class="t " style="left:542.9000000000001px;top:410.2px;color:#484848;">+</div>
<div class="t " style="left:473.9px;top:410.2px;color:#444;">49.00000</div>
<div class="t " style="left:557.8px;top:410.3px;color:#484848;">Hauteur :</div>
<div class="inp" style="left:586.9px;top:407.8px;width:82.7px;height:11.4px;background:#fbfbfb;border-color:#d3d1ce"></div>
<div class="a" style="left:648.6px;top:408.8px;width:20px;height:9.4px;background:#f1f0ef"></div>
<div class="a" style="left:648.6px;top:408.8px;width:0.7px;height:9.4px;background:#dcdad7"></div>
<div class="a" style="left:659.1px;top:408.8px;width:0.7px;height:9.4px;background:#dcdad7"></div>
<div class="t " style="left:651.1px;top:410.2px;color:#484848;">−</div>
<div class="t " style="left:661.3000000000001px;top:410.2px;color:#484848;">+</div>
<div class="t " style="left:590.4px;top:410.2px;color:#444;">48.99992</div>
<div class="t b" style="left:436.3px;top:432.5px;color:#3e3e3e;">Arrière-plan</div>
<div class="a" style="left:438.7px;top:443px;width:5px;height:5px;background:#fff;border:0.7px solid #c8c8c8;border-radius:1px;box-sizing:border-box"></div>
<div class="t " style="left:444.8px;top:442.0px;color:#484848;">Arrière-plan en damier</div>
<div class="t " style="left:436.3px;top:452.4px;color:#484848;">Couleur de fond :</div>
<div class="btn" style="left:492.2px;top:452px;width:15.8px;height:8.5px;background:#f7f7f6;border-color:#d3d1ce"></div>
<div class="a" style="left:496.5px;top:454.5px;width:5px;height:3.5px;background:#ddd;"></div>
<div class="t b" style="left:436.3px;top:462.1px;color:#3e3e3e;">Affichage</div>
<div class="a" style="left:438.4px;top:472.9px;width:5px;height:5px;background:#e4602c;border-radius:1px"></div><div class="a" style="left:439.6px;top:474.1px;width:2.6px;height:2.6px;background:#fbe6dc"></div>
<div class="t " style="left:445px;top:471.9px;color:#484848;">Antialiasing</div>
<div class="t b" style="left:579.4px;top:432.5px;color:#3e3e3e;">Bordure</div>
<div class="a" style="left:580.3px;top:442.7px;width:5px;height:5px;background:#e4602c;border-radius:1px"></div><div class="a" style="left:581.5px;top:443.9px;width:2.6px;height:2.6px;background:#fbe6dc"></div>
<div class="t " style="left:587.2px;top:441.9px;color:#484848;">Afficher la bordure de page</div>
<div class="a" style="left:580.6px;top:453.4px;width:5px;height:5px;background:#fff;border:0.7px solid #c8c8c8;border-radius:1px;box-sizing:border-box"></div>
<div class="t " style="left:587.2px;top:452.2px;color:#484848;">Bordure au-dessus du dessin</div>
<div class="a" style="left:580.3px;top:463.2px;width:5px;height:5px;background:#e4602c;border-radius:1px"></div><div class="a" style="left:581.5px;top:464.4px;width:2.6px;height:2.6px;background:#fbe6dc"></div>
<div class="t " style="left:587.2px;top:462.3px;color:#484848;">Afficher une ombre de bordure</div>
<div class="t " style="left:579.4px;top:472.7px;color:#484848;">Couleur de la bordure :</div>
<div class="btn" style="left:652.2px;top:471px;width:15.1px;height:10px;background:#f7f7f6;border-color:#d3d1ce"></div>
<div class="a" style="left:654.5px;top:473.5px;width:10.5px;height:5px;background:#6b6b6b;"></div>
<div class="a" style="left:746px;top:56px;width:22px;height:434px;background:#f2f1f0"></div>
<div class="a" style="left:746.2px;top:56px;width:0.8px;height:434px;background:#dad8d5"></div>
<svg class="a" style="left:0;top:0" width="768" height="518" viewBox="0 0 768 518"><rect x="753" y="56.5" width="16" height="15" rx="2" fill="#d9d8d6" stroke="#c9c7c4" stroke-width="0.6"/><path d="M758 60h2.5a4 4 0 0 1 0 8h-2.5" fill="none" stroke="#3b3b3b" stroke-width="1.8"/><circle cx="758" cy="60" r="1" fill="#2fae4a"/><circle cx="758" cy="68" r="1" fill="#2fae4a"/><text x="755.5" y="65.5" font-size="4.5" font-family="Liberation Sans" fill="#3b3b3b">s</text><path d="M758 77h2.5a4 4 0 0 1 0 8h-2.5" fill="none" stroke="#3b3b3b" stroke-width="1.8"/><circle cx="758" cy="77" r="1" fill="#2fae4a"/><circle cx="758" cy="85" r="1" fill="#2fae4a"/><text x="755.5" y="82.5" font-size="4.5" font-family="Liberation Sans" fill="#3b3b3b">s</text><rect x="756" y="92" width="9" height="10" fill="none" stroke="#2fae4a" stroke-width="1" stroke-dasharray="2.5 1.5" opacity="0.8"/><g fill="#2fae4a" opacity="0.75"><rect x="756" y="108" width="1.3" height="1.3"/><rect x="764" y="108" width="1.3" height="1.3"/><rect x="756" y="117" width="1.3" height="1.3"/><rect x="764" y="117" width="1.3" height="1.3"/><rect x="756" y="112.5" width="1.3" height="1.3"/><rect x="764" y="112.5" width="1.3" height="1.3"/></g><g fill="#2fae4a" opacity="0.7"><rect x="760" y="123" width="1.2" height="2"/><rect x="760" y="131" width="1.2" height="2"/><rect x="756" y="127.5" width="2" height="1.2"/><rect x="763" y="127.5" width="2" height="1.2"/></g><rect x="754" y="138" width="14" height="13" fill="#ececeb"/><path d="M761 141v7M757.5 144.5h7" stroke="#8fd09a" stroke-width="1"/><rect x="753" y="153.5" width="16" height="15" rx="2" fill="#d9d8d6" stroke="#c9c7c4" stroke-width="0.6"/><path d="M758 157h2.5a4 4 0 0 1 0 8h-2.5" fill="none" stroke="#3b3b3b" stroke-width="1.8"/><circle cx="758" cy="157" r="1" fill="#2fae4a"/><circle cx="758" cy="165" r="1" fill="#2fae4a"/><text x="755.5" y="162.5" font-size="4.5" font-family="Liberation Sans" fill="#3b3b3b">s</text><path d="M756.5 182a4.5 4.5 0 0 1 9 0" fill="none" stroke="#2fae4a" stroke-width="1"/><path d="M756 174.5h10" stroke="#3b3b3b" stroke-width="0.8"/><rect x="760" y="173.5" width="2" height="2" fill="#3b3b3b"/><path d="M756 198l10-10M756 188.5l10 9.5" stroke="#3b3b3b" stroke-width="0.8"/><circle cx="761" cy="193.3" r="1.3" fill="#2fae4a"/><rect x="753" y="201.1" width="16" height="15" rx="2" fill="#d9d8d6" stroke="#c9c7c4" stroke-width="0.6"/><path d="M757 203q7 1 6 8" fill="none" stroke="#3b3b3b" stroke-width="0.9"/><circle cx="760" cy="212" r="1.2" fill="#2fae4a"/><path d="M756.5 230a4.5 4.5 0 0 1 9 0" fill="none" stroke="#3b3b3b" stroke-width="0.9"/><circle cx="761" cy="225.5" r="1.2" fill="#2fae4a"/><path d="M758 236v9M756 238l2-2 2 2M756 243l2 2 2-2M758 240.5h5" fill="none" stroke="#3b3b3b" stroke-width="0.9"/><rect x="763.5" y="235" width="1" height="11" fill="#2fae4a"/><circle cx="764" cy="240.8" r="1.3" fill="#2fae4a"/><rect x="753" y="249.5" width="16" height="15" rx="2" fill="#d9d8d6" stroke="#c9c7c4" stroke-width="0.6"/><path d="M758 253h2.5a4 4 0 0 1 0 8h-2.5" fill="none" stroke="#3b3b3b" stroke-width="1.8"/><circle cx="758" cy="253" r="1" fill="#2fae4a"/><circle cx="758" cy="261" r="1" fill="#2fae4a"/><text x="755.5" y="258.5" font-size="4.5" font-family="Liberation Sans" fill="#3b3b3b">s</text><g fill="#3b3b3b"><rect x="756" y="268.5" width="3" height="3"/><rect x="763" y="268.5" width="3" height="3"/><rect x="756" y="275" width="3" height="3"/><rect x="763" y="275" width="3" height="3"/></g><path d="M761 267v12M755 273.2h12" stroke="#2fae4a" stroke-width="0.9"/><path d="M758 286a3 3 0 1 1 3 3" fill="none" stroke="#2fae4a" stroke-width="1"/><path d="M761 288v5M758.5 290.5h5" stroke="#3b3b3b" stroke-width="0.9"/><path d="M756.5 306l3-9h2l3 9h-1.8l-.7-2h-3l-.7 2z M759.5 302.5h2l-1-3.2z" fill="#3b3b3b"/><path d="M756 307.5h9" stroke="#2fae4a" stroke-width="0.9"/><circle cx="756.5" cy="307.5" r="1" fill="#2fae4a"/><rect x="756.5" y="316" width="9" height="9" fill="none" stroke="#3b3b3b" stroke-width="1"/><rect x="753" y="328.5" width="16" height="15" rx="2" fill="#d9d8d6" stroke="#c9c7c4" stroke-width="0.6"/><path d="M756 331h10M756 333.5h10M756 336h10M756 338.5h10M756 341h10M756.5 330.5v11M759 330.5v11M761.5 330.5v11M764 330.5v11M766 330.5v11" stroke="#4a4a4a" stroke-width="0.5"/><rect x="753" y="346.0" width="16" height="15" rx="2" fill="#d9d8d6" stroke="#c9c7c4" stroke-width="0.6"/><path d="M758 347v12M756 356h10" stroke="#3b3b3b" stroke-width="0.9"/></svg>
<svg class="a" style="left:0;top:0" width="768" height="80" viewBox="0 0 768 80">
<g fill="#3b3b3b"><path d="M435.5 64.5h4v1h-4zM435.5 66.5h5v1h-5zM435.5 68.5h4v1h-4z"/><rect x="435" y="64" width="0.8" height="6" fill="#2fae4a"/></g>
<path d="M447 69l5-5" stroke="#555" stroke-width="1.2"/><path d="M455 66.5l1.5 1.5 1.5-1.5" fill="none" stroke="#555" stroke-width="0.8"/>
<rect x="563" y="64.5" width="4" height="1" fill="#3b3b3b"/><rect x="563" y="67" width="4" height="1" fill="#d03030"/><rect x="563" y="69.5" width="4" height="1" fill="#3b3b3b"/>
<circle cx="571" cy="66" r="2" fill="none" stroke="#2fae4a" stroke-width="0.9"/><circle cx="573" cy="68.5" r="2" fill="none" stroke="#2fae4a" stroke-width="0.9"/>
<path d="M579.5 63.5h3l2 2v4.5h-5z" fill="none" stroke="#3b3b3b" stroke-width="0.9"/><circle cx="584" cy="68.5" r="1" fill="#2fae4a"/>
<circle cx="592.5" cy="66" r="2.3" fill="none" stroke="#3b3b3b" stroke-width="0.9"/><path d="M590.5 68l-1.5 2" stroke="#3b3b3b" stroke-width="0.9"/>
<rect x="599.5" y="63.5" width="6" height="6" fill="none" stroke="#3b3b3b" stroke-width="0.9"/><rect x="600.5" y="66" width="3" height="2.5" fill="#2fae4a"/>
<path d="M609.5 70l3-3 1 1z" fill="#3b3b3b"/><circle cx="613.5" cy="65" r="1.5" fill="#e02020"/>
</g>
</svg>
<div class="a" style="left:0;top:490.5px;width:768px;height:10.3px;background:#f2f1f0"></div>
<svg class="a" style="left:0;top:0" width="768" height="518" viewBox="0 0 768 518"><rect x="0" y="490.8" width="13.3" height="10.1" fill="#fff"/><path d="M1 491.3l12 9.2M13 491.3l-12 9.2" stroke="#9b3030" stroke-width="1"/><rect x="13.35" y="490.8" width="12.1" height="10.1" fill="#000000"/><rect x="25.40" y="490.8" width="12.1" height="10.1" fill="#f0f0f6"/><rect x="37.45" y="490.8" width="12.1" height="10.1" fill="#efe9d9"/><rect x="49.50" y="490.8" width="12.1" height="10.1" fill="#4a4046"/><rect x="61.55" y="490.8" width="12.1" height="10.1" fill="#4e5a5f"/><rect x="73.60" y="490.8" width="12.1" height="10.1" fill="#959595"/><rect x="85.65" y="490.8" width="12.1" height="10.1" fill="#bdb5b3"/><rect x="97.70" y="490.8" width="12.1" height="10.1" fill="#cdcac9"/><rect x="109.75" y="490.8" width="12.1" height="10.1" fill="#cc0000"/><rect x="121.80" y="490.8" width="12.1" height="10.1" fill="#6f1822"/><rect x="133.85" y="490.8" width="12.1" height="10.1" fill="#c8105a"/><rect x="145.90" y="490.8" width="12.1" height="10.1" fill="#ee0000"/><rect x="157.95" y="490.8" width="12.1" height="10.1" fill="#f57900"/><rect x="170.00" y="490.8" width="12.1" height="10.1" fill="#ffd400"/><rect x="182.05" y="490.8" width="12.1" height="10.1" fill="#ffaa00"/><rect x="194.10" y="490.8" width="12.1" height="10.1" fill="#fff07a"/><rect x="206.15" y="490.8" width="12.1" height="10.1" fill="#c8b000"/><rect x="218.20" y="490.8" width="12.1" height="10.1" fill="#ffc400"/><rect x="230.25" y="490.8" width="12.1" height="10.1" fill="#ffe4a0"/><rect x="242.30" y="490.8" width="12.1" height="10.1" fill="#1c5212"/><rect x="254.35" y="490.8" width="12.1" height="10.1" fill="#8fcf62"/><rect x="266.40" y="490.8" width="12.1" height="10.1" fill="#2b6e30"/><rect x="278.45" y="490.8" width="12.1" height="10.1" fill="#d8f020"/><rect x="290.50" y="490.8" width="12.1" height="10.1" fill="#6a9a62"/><rect x="302.55" y="490.8" width="12.1" height="10.1" fill="#c0cc9a"/><rect x="314.60" y="490.8" width="12.1" height="10.1" fill="#007a62"/><rect x="326.65" y="490.8" width="12.1" height="10.1" fill="#8ec8c2"/><rect x="338.70" y="490.8" width="12.1" height="10.1" fill="#0f5888"/><rect x="350.75" y="490.8" width="12.1" height="10.1" fill="#2ea2d2"/><rect x="362.80" y="490.8" width="12.1" height="10.1" fill="#3a2a40"/><rect x="374.85" y="490.8" width="12.1" height="10.1" fill="#0a78d8"/><rect x="386.90" y="490.8" width="12.1" height="10.1" fill="#101a90"/><rect x="398.95" y="490.8" width="12.1" height="10.1" fill="#5a62c8"/><rect x="411.00" y="490.8" width="12.1" height="10.1" fill="#203052"/><rect x="423.05" y="490.8" width="12.1" height="10.1" fill="#8080c8"/><rect x="435.10" y="490.8" width="12.1" height="10.1" fill="#3a3f90"/><rect x="447.15" y="490.8" width="12.1" height="10.1" fill="#9010a0"/><rect x="459.20" y="490.8" width="12.1" height="10.1" fill="#ffc8d0"/><rect x="471.25" y="490.8" width="12.1" height="10.1" fill="#e03078"/><rect x="483.30" y="490.8" width="12.1" height="10.1" fill="#f09880"/><rect x="495.35" y="490.8" width="12.1" height="10.1" fill="#ff9898"/><rect x="507.40" y="490.8" width="12.1" height="10.1" fill="#7010a0"/><rect x="519.45" y="490.8" width="12.1" height="10.1" fill="#e8b0e8"/><rect x="531.50" y="490.8" width="12.1" height="10.1" fill="#d05080"/><rect x="543.55" y="490.8" width="12.1" height="10.1" fill="#ff50c0"/><rect x="555.60" y="490.8" width="12.1" height="10.1" fill="#ffa8e0"/><rect x="567.65" y="490.8" width="12.1" height="10.1" fill="#6a2018"/><rect x="579.70" y="490.8" width="12.1" height="10.1" fill="#e8a850"/><rect x="591.75" y="490.8" width="12.1" height="10.1" fill="#a06048"/><rect x="603.80" y="490.8" width="12.1" height="10.1" fill="#804030"/><rect x="615.85" y="490.8" width="12.1" height="10.1" fill="#e88838"/><rect x="627.90" y="490.8" width="12.1" height="10.1" fill="#f0b070"/><rect x="639.95" y="490.8" width="12.1" height="10.1" fill="#988070"/><rect x="652.00" y="490.8" width="12.1" height="10.1" fill="#d8a080"/><rect x="664.05" y="490.8" width="12.1" height="10.1" fill="#d03818"/><rect x="676.10" y="490.8" width="12.1" height="10.1" fill="#f8e4c8"/><rect x="688.15" y="490.8" width="12.1" height="10.1" fill="#e8dcc0"/><rect x="700.20" y="490.8" width="12.1" height="10.1" fill="#807060"/><rect x="712.25" y="490.8" width="12.1" height="10.1" fill="#606020"/><rect x="724.30" y="490.8" width="12.1" height="10.1" fill="#887000"/><rect x="736.35" y="490.8" width="12.1" height="10.1" fill="#a8b8d8"/><rect x="748.40" y="490.8" width="12.1" height="10.1" fill="#605878"/><path d="M765.5 493.8v4l-2.2-2z" fill="#3b3b3b"/></svg>
<div class="a" style="left:0;top:500.8px;width:768px;height:17.2px;background:#f2f1f0"></div>
<div class="t" style="left:11.7px;top:500.7px;color:#484848;letter-spacing:-0.3px">Fond :</div>
<div class="t b" style="left:30px;top:500.7px;color:#444">m</div>
<div class="a" style="left:37.7px;top:501.7px;width:24.6px;height:6px;background:#e05572"></div>
<div class="t" style="left:1.7px;top:508.8px;color:#484848">Contour :</div>
<div class="t b" style="left:31.7px;top:508.8px;color:#444">p Indéfini</div>
<div class="t" style="left:65px;top:508.8px;color:#484848">4.85</div>
<div class="t" style="left:79.5px;top:505.0px;color:#484848;font-size:7.5px">O :</div>
<div class="inp" style="left:89.4px;top:502.7px;width:38.8px;height:14px;background:#fbfbfb;border-color:#d3d1ce"></div>
<div class="a" style="left:106.4px;top:503.7px;width:21px;height:12px;background:#f1f0ef"></div>
<div class="a" style="left:106.4px;top:503.7px;width:0.7px;height:12px;background:#dcdad7"></div><div class="a" style="left:117.3px;top:503.7px;width:0.7px;height:12px;background:#dcdad7"></div>
<div class="t" style="left:92.5px;top:505.5px;color:#444;font-size:7.5px">100</div>
<div class="t" style="left:109.5px;top:505.5px;color:#484848">−</div><div class="t" style="left:120px;top:505.5px;color:#484848">+</div>
<svg class="a" style="left:132px;top:504px" width="20" height="10"><circle cx="4" cy="5" r="2.5" fill="none" stroke="#c4c4c4" stroke-width="0.9"/><path d="M4 2v6M1 5h6" stroke="#c4c4c4" stroke-width="0.7"/><rect x="14" y="5" width="4" height="3.5" fill="#c8c8c8"/><path d="M15 5v-1.5a1.3 1.3 0 0 1 2.6 0" fill="none" stroke="#c8c8c8" stroke-width="0.8"/></svg>
<div class="btn" style="left:153.75px;top:502.7px;width:32.5px;height:14px;background:#f7f7f6;border-color:#d3d1ce"></div>
<div class="t" style="left:158.5px;top:505.3px;color:#484848;font-size:6.3px">(racine) ▾</div>
<div class="t" style="left:187.6px;top:505.0px;color:#444;letter-spacing:-0.05px"><b>4</b> objets de types <b>Groupe</b>, <b>Cercle</b>, <b>Chemin</b> sélectionnés dans racine. Click selection again to toggle scale/rotation handles.</div>
<div class="a" style="left:611px;top:502px;width:0.7px;height:15px;background:#d5d3d0"></div>
<div class="t" style="left:614.9px;top:501.3px;color:#484848">X:</div><div class="t" style="left:630px;top:501.3px;color:#484848">14.14</div>
<div class="t" style="left:614.9px;top:509.1px;color:#484848">Y:</div><div class="t" style="left:630px;top:509.1px;color:#484848">38.81</div>
<div class="t" style="left:650.8px;top:505.0px;color:#484848">Z:</div>
<div class="inp" style="left:660.4px;top:502px;width:45px;height:15.5px;background:#fbfbfb;border-color:#d3d1ce"></div>
<div class="a" style="left:686.5px;top:503px;width:18.2px;height:13.5px;background:#f1f0ef"></div>
<div class="t" style="left:664px;top:505.5px;color:#444">434%</div>
<div class="t" style="left:688.5px;top:505.5px;color:#484848">−</div><div class="t" style="left:696.5px;top:505.5px;color:#484848">+</div>
<div class="t" style="left:708.1px;top:505.5px;color:#484848">R:</div>
<div class="inp" style="left:719px;top:502px;width:49px;height:15.5px;background:#fbfbfb;border-color:#d3d1ce"></div>
<div class="a" style="left:747.7px;top:503px;width:20px;height:13.5px;background:#f1f0ef"></div>
<div class="t" style="left:723.7px;top:505.5px;color:#444">0.00°</div>
<div class="t" style="left:750.4px;top:505.5px;color:#484848">−</div><div class="t" style="left:758px;top:505.5px;color:#484848">+</div>
<div class="a" style="left:461px;top:62.3px;width:97.5px;height:11px;background:#f4f3f2"></div>
<svg class="a" style="left:465px;top:64px" width="8" height="8"><circle cx="4" cy="3.5" r="2" fill="none" stroke="#999" stroke-width="0.7"/><path d="M2.5 5l-1.5 2" stroke="#999" stroke-width="0.7"/></svg>
<div class="t" style="left:472px;top:63.8px;color:#333;">Propriétés du document</div>
<div class="t" style="left:551.5px;top:63.8px;color:#888;">×</div>
<div class="t" style="left:440px;top:289.5px;color:#444;font-size:5px">▸</div>
<div class="t" style="left:444.5px;top:289.5px;color:#333;">Redimensionner la page au contenu...</div>
<div class="btn" style="left:597px;top:313.9px;width:13.6px;height:11.4px;background:#e4e3e1;border-color:#d3d1ce"></div>
<svg class="a" style="left:599px;top:314.5px" width="10" height="10"><path d="M3 5v-1.5a2 2 0 0 1 4 0v1.5" fill="none" stroke="#3b3b3b" stroke-width="1.1"/><rect x="2.3" y="4.8" width="5.4" height="4.4" fill="#3b3b3b"/></svg>
<div class="btn" style="left:502.9px;top:341.8px;width:174.8px;height:12.6px;background:#f4f3f2;border-color:#d3d1ce"></div>
<div class="t" style="left:504.3px;top:345.0px;color:#333;">Ajuster la page au dessin ou à la sélection (Maj+Ctrl+R)</div>
<div class="t" style="left:437.5px;top:382.9px;color:#333;font-size:6px">▾</div>
<div class="t" style="left:444px;top:382.9px;color:#333;">Zone de vue...</div>
<svg class="a" style="left:0;top:0" width="768" height="518" viewBox="0 0 768 518"><ellipse cx="12.9" cy="23.2" rx="12.20" ry="11.60" fill="rgba(60,60,240,0.3)" stroke="#e41fec" stroke-width="1.4"/><text x="12.9" y="26.20" text-anchor="middle" font-family="Liberation Sans" font-size="7.5" fill="#d926e6">1</text><ellipse cx="450.5" cy="63.9" rx="7.65" ry="7.10" fill="rgba(60,60,240,0.3)" stroke="#e41fec" stroke-width="1.4"/><text x="450.5" y="66.90" text-anchor="middle" font-family="Liberation Sans" font-size="9.5" fill="#d926e6">2</text><rect x="460.60" y="62.00" width="98.10" height="11.60" fill="rgba(60,60,240,0.3)" stroke="#e41fec" stroke-width="1.4"/><rect x="439.45" y="288.60" width="125.15" height="8.40" fill="rgba(60,60,240,0.3)" stroke="#e41fec" stroke-width="1.4"/><ellipse cx="439.8" cy="307.6" rx="8.90" ry="8.00" fill="rgba(60,60,240,0.3)" stroke="#e41fec" stroke-width="1.4"/><text x="439.8" y="310.60" text-anchor="middle" font-family="Liberation Sans" font-size="9.2" fill="#d926e6">3</text><ellipse cx="561.15" cy="319.1" rx="8.15" ry="7.10" fill="rgba(60,60,240,0.3)" stroke="#e41fec" stroke-width="1.4"/><text x="561.15" y="322.10" text-anchor="middle" font-family="Liberation Sans" font-size="9.2" fill="#d926e6">4</text><rect x="593.10" y="313.50" width="22.20" height="15.30" fill="rgba(60,60,240,0.3)" stroke="#e41fec" stroke-width="1.4"/><rect x="568.80" y="330.20" width="29.10" height="9.50" fill="rgba(60,60,240,0.3)" stroke="#e41fec" stroke-width="1.4"/><rect x="500.70" y="341.30" width="177.70" height="13.60" fill="rgba(60,60,240,0.3)" stroke="#e41fec" stroke-width="1.4"/><ellipse cx="693.5" cy="347.9" rx="9.30" ry="7.90" fill="rgba(60,60,240,0.3)" stroke="#e41fec" stroke-width="1.4"/><text x="693.5" y="350.90" text-anchor="middle" font-family="Liberation Sans" font-size="9.2" fill="#d926e6">5</text><rect x="435.90" y="381.20" width="56.30" height="9.80" fill="rgba(60,60,240,0.3)" stroke="#e41fec" stroke-width="1.4"/><ellipse cx="429.85" cy="401.35" rx="8.90" ry="8.75" fill="rgba(60,60,240,0.3)" stroke="#e41fec" stroke-width="1.4"/><text x="429.85" y="404.35" text-anchor="middle" font-family="Liberation Sans" font-size="9.5" fill="#d926e6">6</text><rect x="464.30" y="393.90" width="207.40" height="10.80" fill="rgba(60,60,240,0.3)" stroke="#e41fec" stroke-width="1.4"/></svg>
<div class="a" style="left:1px;top:24px;width:0.6px;height:494px;background:#6b6b6b"></div><div class="a" style="left:0;top:69.9px;width:1px;height:2.6px;background:#b07080"></div>
</body></html>
